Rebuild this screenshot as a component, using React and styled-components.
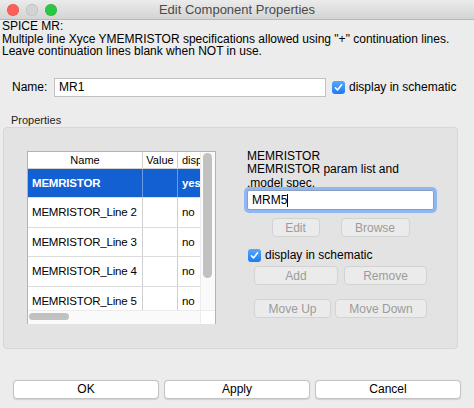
import React from 'react';
import styled, { createGlobalStyle } from 'styled-components';

const GlobalStyle = createGlobalStyle`
  html, body {
    margin: 0;
    padding: 0;
    background: #ececec;
  }
  body {
    font-family: "Liberation Sans", Arial, Helvetica, sans-serif;
    font-size: 12px;
    color: #000;
  }
`;

const Window = styled.div`
  width: 474px;
  height: 408px;
  display: flex;
  flex-direction: column;
  background: #ececec;
  overflow: hidden;
`;

const TitleBar = styled.div`
  height: 19px;
  display: grid;
  grid-template-columns: 1fr auto 1fr;
  align-items: center;
  background: linear-gradient(#ebebeb, #d4d4d4);
  border-bottom: 1px solid #b8b8b8;
  box-sizing: content-box;
`;

const Lights = styled.div`
  display: flex;
  gap: 7px;
  padding-left: 7px;
`;

const Light = styled.span`
  width: 12px;
  height: 12px;
  border-radius: 50%;
  background: ${(p) => p.color};
  box-shadow: inset 0 0 0 0.5px rgba(0, 0, 0, 0.15);
`;

const Title = styled.div`
  font-size: 13px;
  color: #4a4a4a;
`;

const Description = styled.div`
  padding: 0 2px;
  line-height: 12.5px;
  font-size: 12px;
`;

const NameRow = styled.div`
  display: flex;
  align-items: center;
  margin-top: 20px;
  padding-left: 12px;
  height: 19px;
`;

const FieldLabel = styled.span`
  width: 42px;
`;

const TextField = styled.div`
  box-sizing: border-box;
  width: ${(p) => p.width}px;
  height: ${(p) => p.height || 19}px;
  display: flex;
  align-items: center;
  padding-left: 4px;
  background: #fff;
  border: 1px solid ${(p) => (p.focused ? '#8a9fbe' : '#c2c2c2')};
  box-shadow: ${(p) => (p.focused ? '0 0 0 3px #8fb8f3' : 'none')};
  border-radius: ${(p) => (p.focused ? '2px' : '0')};
`;

const Caret = styled.span`
  width: 1px;
  height: 13px;
  background: #000;
`;

const CheckLabel = styled.label`
  display: flex;
  align-items: center;
  gap: 4px;
  margin-left: ${(p) => p.offset || 0}px;
  margin-top: ${(p) => p.top || 0}px;
`;

const Box = styled.span`
  width: 13px;
  height: 13px;
  border-radius: 3px;
  background: linear-gradient(#5aa6fb, #1b7cf5);
  display: flex;
  align-items: center;
  justify-content: center;
`;

const Check = () => (
  <Box>
    <svg width="9" height="9" viewBox="0 0 9 9">
      <path d="M1.4 4.8 L3.5 7 L7.6 1.8" fill="none" stroke="#fff" strokeWidth="1.6" strokeLinecap="round" strokeLinejoin="round" />
    </svg>
  </Box>
);

const GroupTitle = styled.div`
  margin-top: 17px;
  padding-left: 11px;
  font-size: 11px;
  line-height: 13px;
  color: #222;
`;

const Group = styled.div`
  box-sizing: border-box;
  width: 455px;
  height: 222px;
  margin-left: 3px;
  background: #e3e3e3;
  border: 1px solid #d6d6d6;
  border-radius: 4px;
  padding: 23px 0 0 23px;
  display: flex;
`;

const Table = styled.div`
  box-sizing: border-box;
  width: 189px;
  height: 173px;
  border: 1px solid #b3b3b3;
  background: #fff;
  display: grid;
  grid-template-columns: 172px 15px;
  grid-template-rows: 158px 14px;
`;

const Rows = styled.div`
  overflow: hidden;
`;

const Row = styled.div`
  display: grid;
  grid-template-columns: 115px 35px 22px;
  height: ${(p) => (p.header ? 16 : 28.5)}px;
  background: ${(p) => (p.selected ? '#1260d2' : '#fff')};
  color: ${(p) => (p.selected ? '#fff' : '#000')};
  font-weight: ${(p) => (p.selected ? 'bold' : 'normal')};
  font-size: ${(p) => (p.header ? 11 : 11.5)}px;
  letter-spacing: ${(p) => (p.header ? 0 : -0.2)}px;
  border-bottom: 1px solid ${(p) => (p.header ? '#d2d2d2' : '#dcdcdc')};
`;

const Cell = styled.div`
  display: flex;
  align-items: center;
  justify-content: ${(p) => (p.center ? 'center' : 'flex-start')};
  padding-left: ${(p) => (p.center ? 0 : 4)}px;
  overflow: hidden;
  white-space: nowrap;
  border-right: 1px solid ${(p) => (p.selected ? '#6b9be3' : '#cfcfcf')};
  &:last-child {
    border-right: none;
  }
`;

const VScroll = styled.div`
  border-left: 1px solid #ececec;
  background: #fafafa;
  padding: 1px 2px 0 2px;
`;

const VThumb = styled.div`
  width: 9px;
  height: 125px;
  border-radius: 5px;
  background: #c1c1c1;
`;

const HScroll = styled.div`
  border-top: 1px solid #ececec;
  background: #fafafa;
  padding: 2px 0 0 1px;
`;

const HThumb = styled.div`
  width: 40px;
  height: 7px;
  border-radius: 4px;
  background: #c1c1c1;
`;

const Corner = styled.div`
  border-top: 1px solid #ececec;
  border-left: 1px solid #ececec;
  background: #fff;
`;

const Panel = styled.div`
  width: 187px;
  margin-left: 31px;
  display: flex;
  flex-direction: column;
`;

const PanelText = styled.div`
  line-height: 13.5px;
  font-size: 12px;
  margin-top: -1px;
`;

const ButtonRow = styled.div`
  display: flex;
  justify-content: center;
  gap: ${(p) => p.gap}px;
  margin-top: ${(p) => p.top}px;
`;

const SmallButton = styled.div`
  box-sizing: border-box;
  width: ${(p) => p.width}px;
  height: 19px;
  display: flex;
  align-items: center;
  justify-content: center;
  background: #ebebeb;
  border: 1px solid #d3d3d3;
  border-radius: 4px;
  color: #9b9b9b;
  font-size: 12px;
`;

const Footer = styled.div`
  display: flex;
  gap: 5px;
  padding: 0 13px;
  margin-top: 31px;
`;

const FooterButton = styled.div`
  flex: 1;
  box-sizing: border-box;
  height: 19px;
  display: flex;
  align-items: center;
  justify-content: center;
  background: #fff;
  border: 1px solid #c3c3c3;
  border-radius: 4px;
  box-shadow: 0 0.5px 1px rgba(0, 0, 0, 0.12);
  font-size: 12px;
`;

const rows = [
  { name: 'MEMRISTOR', disp: 'yes', selected: true },
  { name: 'MEMRISTOR_Line 2', disp: 'no' },
  { name: 'MEMRISTOR_Line 3', disp: 'no' },
  { name: 'MEMRISTOR_Line 4', disp: 'no' },
  { name: 'MEMRISTOR_Line 5', disp: 'no' },
];

const App = () => {
  return (
    <>
      <GlobalStyle />
      <Window>
        <TitleBar>
          <Lights>
            <Light color="#fc5f57" />
            <Light color="#d3d3d3" />
            <Light color="#2ac840" />
          </Lights>
          <Title>Edit Component Properties</Title>
          <span />
        </TitleBar>

        <Description>
          SPICE MR:
          <br />
          Multiple line Xyce YMEMRISTOR specifications allowed using "+" continuation lines.
          <br />
          Leave continuation lines blank when NOT in use.
        </Description>

        <NameRow>
          <FieldLabel>Name:</FieldLabel>
          <TextField width={272}>MR1</TextField>
          <CheckLabel offset={6}>
            <Check />
            display in schematic
          </CheckLabel>
        </NameRow>

        <GroupTitle>Properties</GroupTitle>
        <Group>
          <Table>
            <Rows>
              <Row header>
                <Cell center>Name</Cell>
                <Cell center>Value</Cell>
                <Cell>disp</Cell>
              </Row>
              {rows.map((r) => (
                <Row key={r.name} selected={r.selected}>
                  <Cell selected={r.selected}>{r.name}</Cell>
                  <Cell selected={r.selected} />
                  <Cell selected={r.selected}>{r.disp}</Cell>
                </Row>
              ))}
            </Rows>
            <VScroll>
              <VThumb />
            </VScroll>
            <HScroll>
              <HThumb />
            </HScroll>
            <Corner />
          </Table>

          <Panel>
            <PanelText>
              MEMRISTOR
              <br />
              MEMRISTOR param list and .model spec.
            </PanelText>
            <TextField width={187} height={20} focused>
              MRM5
              <Caret />
            </TextField>
            <ButtonRow gap={21} top={8}>
              <SmallButton width={48}>Edit</SmallButton>
              <SmallButton width={69}>Browse</SmallButton>
            </ButtonRow>
            <CheckLabel offset={1} top={11}>
              <Check />
              display in schematic
            </CheckLabel>
            <ButtonRow gap={6} top={4}>
              <SmallButton width={84}>Add</SmallButton>
              <SmallButton width={83}>Remove</SmallButton>
            </ButtonRow>
            <ButtonRow gap={4} top={14}>
              <SmallButton width={77}>Move Up</SmallButton>
              <SmallButton width={92}>Move Down</SmallButton>
            </ButtonRow>
          </Panel>
        </Group>

        <Footer>
          <FooterButton>OK</FooterButton>
          <FooterButton>Apply</FooterButton>
          <FooterButton>Cancel</FooterButton>
        </Footer>
      </Window>
    </>
  );
};

export default App;
